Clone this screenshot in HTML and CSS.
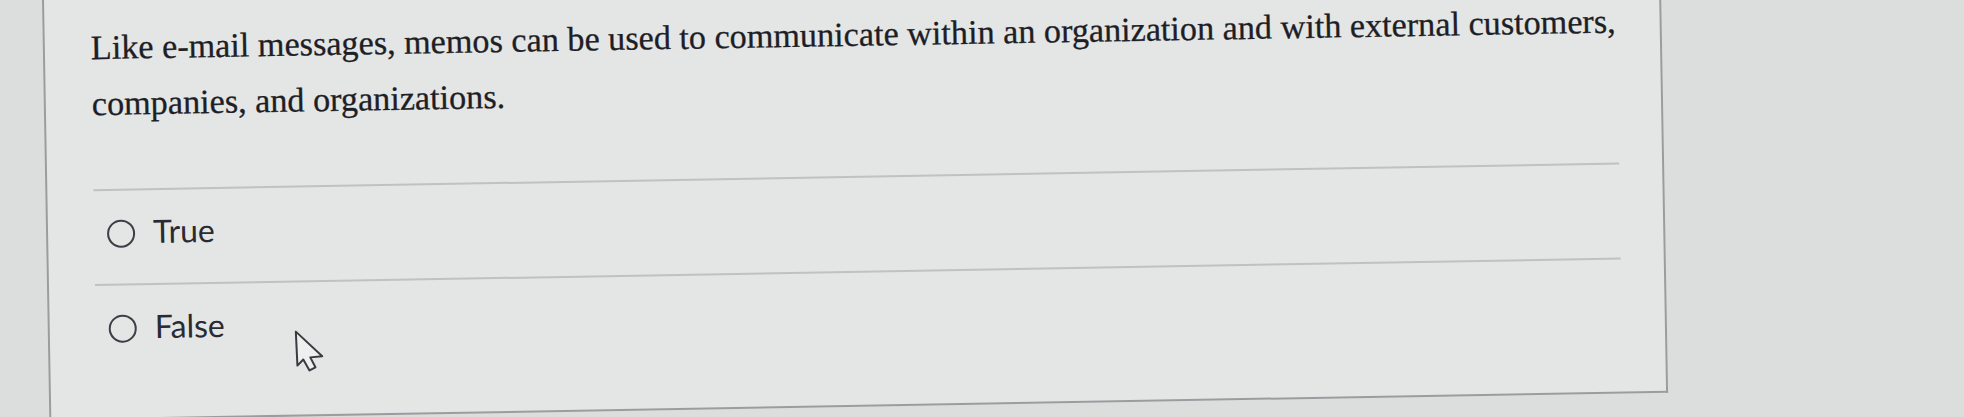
FILE: index.html
```html
<!DOCTYPE html>
<html lang="en">
<head>
  <meta charset="UTF-8">
  <title>Question</title>
  <link rel="stylesheet" href="styles.css">
</head>
<body>
  <div class="question">
    <div class="question-text">
      Like e-mail messages, memos can be used to communicate within an organization and with external customers, companies, and organizations.
    </div>

    <div class="answers">
      <label class="answer">
        <input type="radio" name="answer" value="true">
        <span class="answer-label">True</span>
      </label>
      <label class="answer">
        <input type="radio" name="answer" value="false">
        <span class="answer-label">False</span>
      </label>
    </div>

    <!-- mouse pointer resting over the card -->
    <svg class="pointer" width="32" height="44" viewBox="0 0 32 44">
      <path d="M2 2 L3 36 L9 30 L15 41 L21 38 L16 28 L28 27 Z" fill="#eef0ef" stroke="#3a3a42" stroke-width="2" stroke-linejoin="round"/>
    </svg>
  </div>
</body>
</html>
```

FILE: styles.css
```css
html {
  background-color: #dcdedd;
}

body {
  margin: 0;
  height: 417px;
  overflow: hidden;
  font-family: "Liberation Serif", "Times New Roman", serif;
  color: #1e1e26;
}

.question {
  position: relative;
  box-sizing: border-box;
  width: 1619px;
  height: 421px;
  margin-left: 42px;
  padding: 21px 43px 0 46px;
  background-color: #e4e6e5;
  border: 2px solid #9a9ca0;
  border-top: none;
  transform: rotate(-1deg);
  transform-origin: 0 0;
}

.question-text {
  margin-right: -36px;
  font-size: 34.2px;
  line-height: 55.5px;
  -webkit-text-stroke: 0.3px #1e1e26;
}

.answers {
  margin-top: 58px;
  font-family: Lato, "Open Sans", sans-serif;
}

.answer {
  display: flex;
  align-items: center;
  gap: 18px;
  padding: 22px 0 33px 13px;
  border-top: 2px solid #bfc1c2;
  cursor: pointer;
}

.answer input[type="radio"] {
  appearance: none;
  -webkit-appearance: none;
  box-sizing: border-box;
  width: 28px;
  height: 28px;
  margin: 4px 0 0;
  border: 2.5px solid #3e3e46;
  border-radius: 50%;
  background: transparent;
}

.answer input[type="radio"]:checked {
  background: radial-gradient(circle, #3e3e46 45%, transparent 50%);
}

.answer-label {
  font-size: 32px;
  line-height: 38px;
  color: #2b2a33;
}

.pointer {
  position: absolute;
  left: 244px;
  top: 334px;
}
```
